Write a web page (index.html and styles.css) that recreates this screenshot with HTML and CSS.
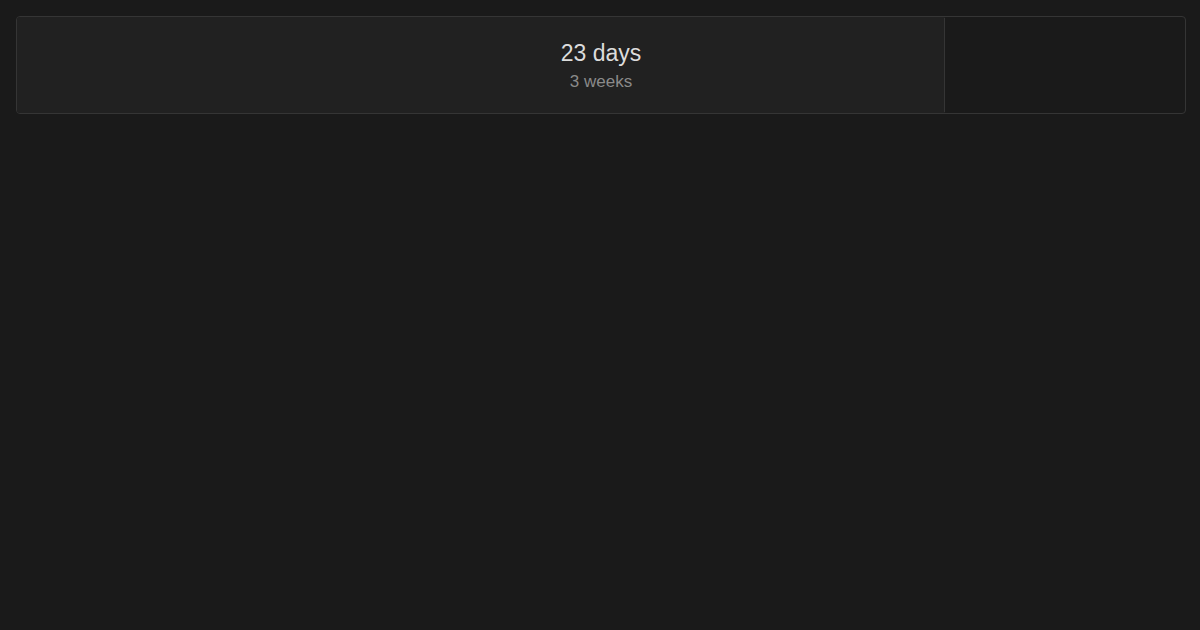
FILE: index.html
```html
<!DOCTYPE html>
<html lang="en">
<head>
    <meta charset="UTF-8">
    <meta name="viewport" content="width=device-width, initial-scale=1.0">
    <title>Countdown</title>
    <link rel="stylesheet" href="styles.css">
</head>
<body>
    <div class="panel">
        <div class="fill" style="width: 79.45%"></div>
        <div class="count">
            <div class="days">23 days</div>
            <div class="weeks">3 weeks</div>
        </div>
    </div>
</body>
</html>
```

FILE: styles.css
```css
body { font-family: "Liberation Sans", Arial, sans-serif; background-color: #1a1a1a; color: #ddd; margin: 0; padding: 16px; }
.panel { position: relative; width: 1168px; height: 96px; border: 1px solid #353535; border-radius: 4px; overflow: hidden; }
.fill { position: absolute; left: 0; top: 0; bottom: 0; background-color: #212121; }
.fill::after { content: ""; position: absolute; right: 0; top: 1px; bottom: 1px; width: 1px; background-color: #353535; }
.count { position: relative; height: 100%; display: flex; flex-direction: column; align-items: center; justify-content: center; gap: 5px; padding-top: 1px; box-sizing: border-box; }
.days { font-size: 23px; color: #dcdcdc; }
.weeks { font-size: 17px; color: #8a8a8a; }
```
